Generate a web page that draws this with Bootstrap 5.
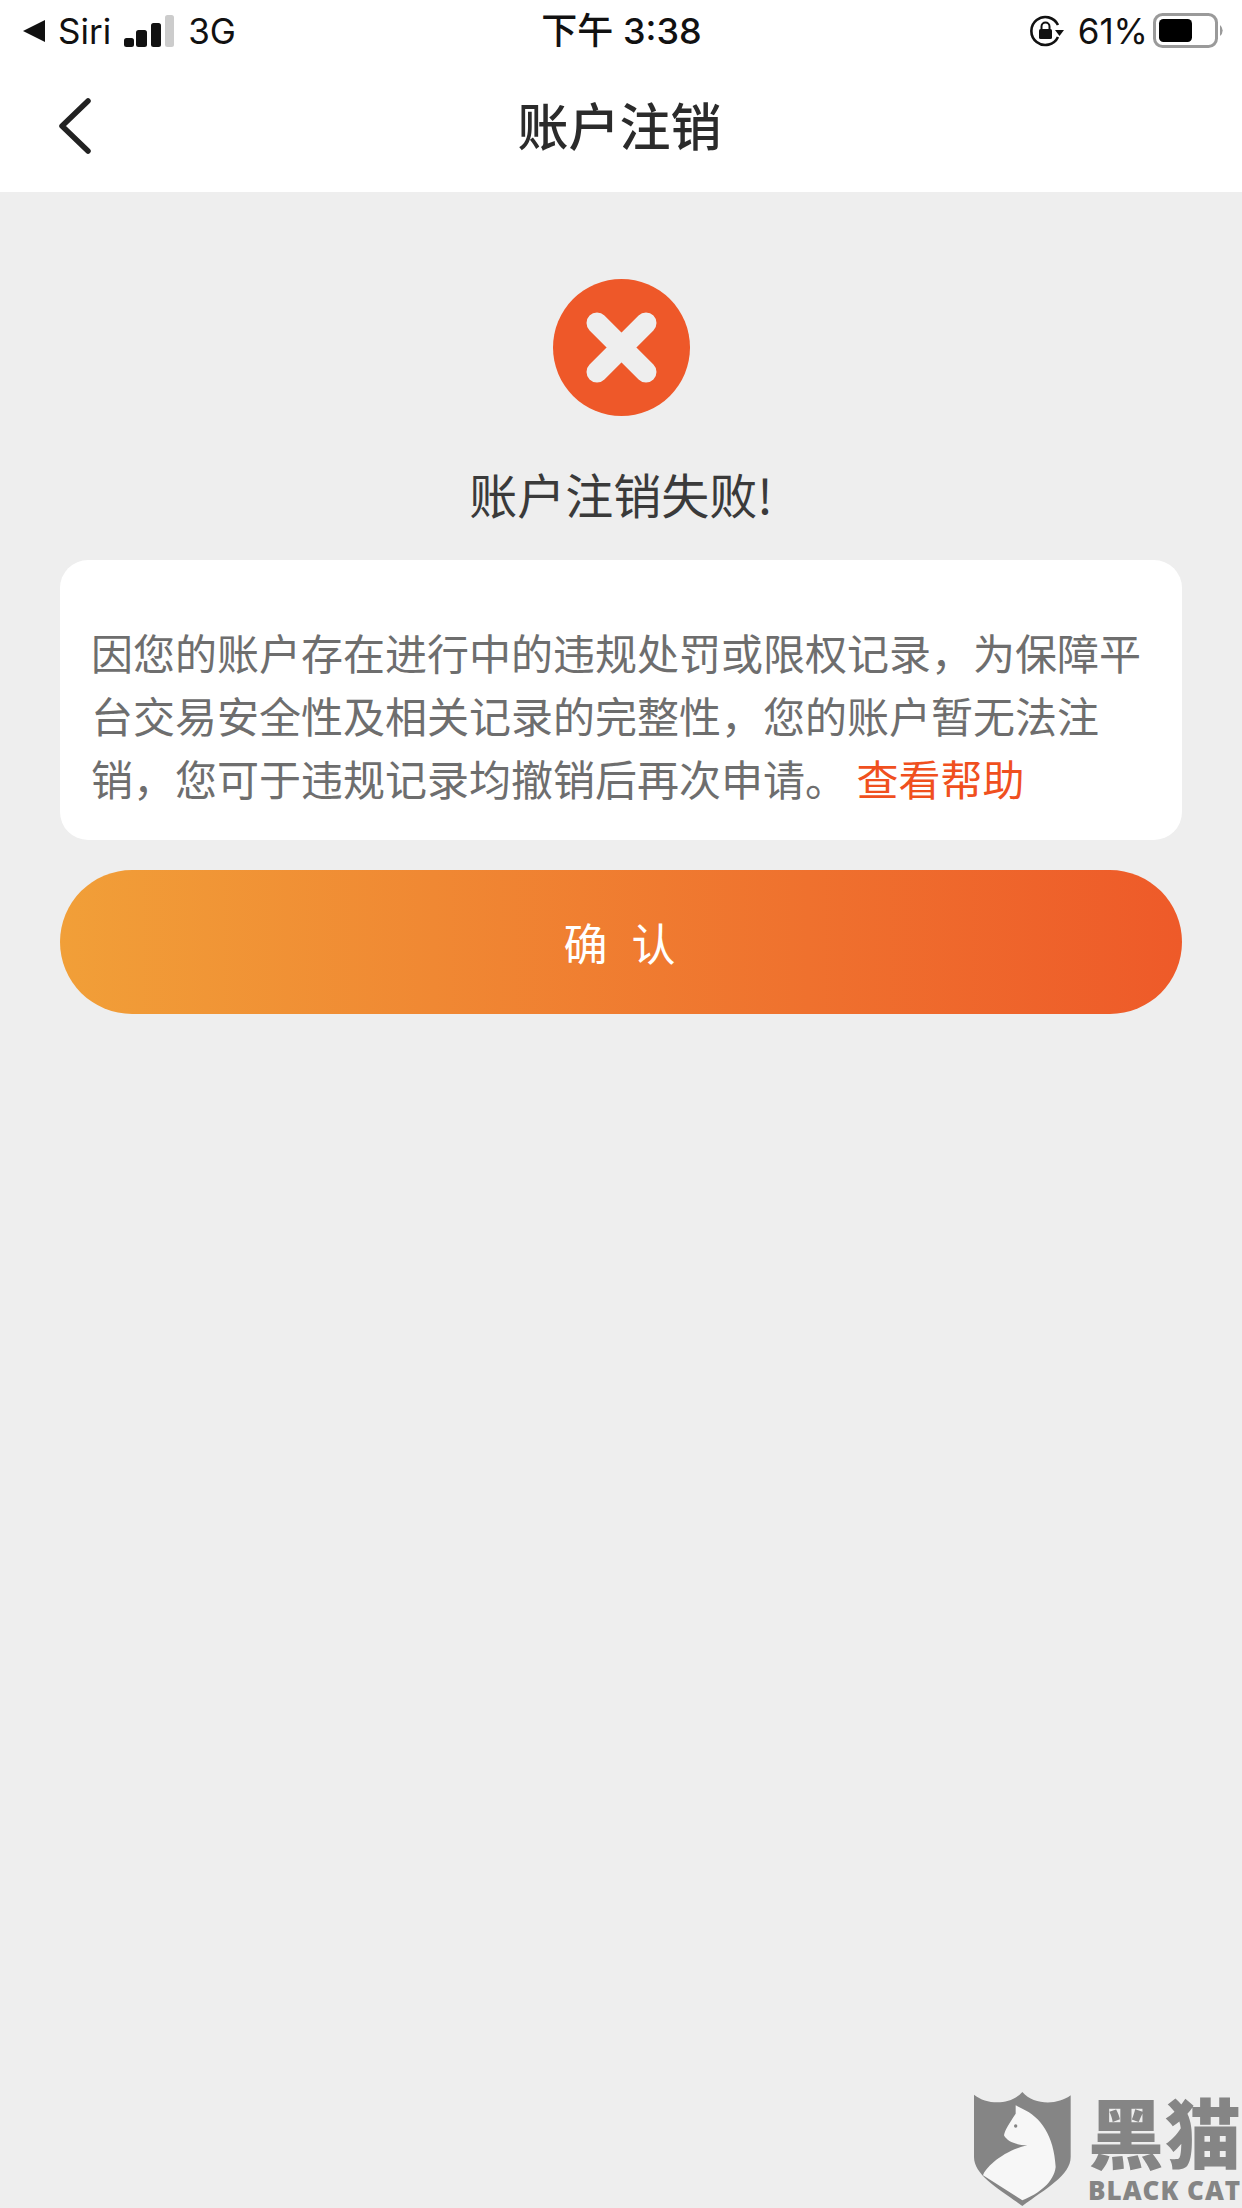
<!DOCTYPE html>
<html lang="zh-CN">
<head>
    <meta charset="UTF-8">
    <meta name="viewport" content="width=device-width, initial-scale=1.0">
    <title>账户注销</title>
    <link href="https://cdn.jsdelivr.net/npm/bootstrap@5.3.0/dist/css/bootstrap.min.css" rel="stylesheet">
    <style>
        body { background: #eeeeee; font-family: "Noto Sans CJK SC", sans-serif; height: 2208px; width: 1242px; overflow: hidden; }
        .status-bar { height: 62px; padding: 0 17px 0 23px; font-family: Inter, "Noto Sans CJK SC", sans-serif; font-size: 35px; color: #111; background: #fff; }
        .status-side { width: 400px; }
        .siri-label { margin-left: 13px; }
        .signal-bars { margin-left: 13px; }
        .net-label { margin-left: 12px; }
        .lock-pct { margin-left: 13px; }
        .batt-icon { margin-left: 5px; }
        .status-clock { font-size: 36px; font-weight: 500; margin-left: -5px; }
        .top-nav { height: 130px; background: #fff; }
        .back-link { left: 57px; top: 35px; line-height: 0; }
        .nav-title { font-size: 51px; font-weight: 500; color: #2b2b2b; line-height: 1; margin-top: -6px; margin-left: -3px; }
        .fail-icon { margin-top: 87px; line-height: 0; }
        .fail-title { font-size: 48px; color: #3a3a3a; line-height: 1; margin-top: 53px; }
        .notice-box { margin: 43px 60px 0; height: 280px; border-radius: 28px; background: #fff; padding: 60px 24px 0 31px; font-size: 42px; line-height: 63px; color: #6e6e6e; }
        .notice-link { color: #f0501e; text-decoration: none; }
        .confirm-btn { display: block; margin: 30px 60px 0; width: 1122px; height: 144px; border: 0; border-radius: 72px; background: linear-gradient(90deg, #f19f38, #ee5a29); color: #fff; font-size: 44px; letter-spacing: 7px; padding-left: 10px; }
        .watermark { right: 0; bottom: 1px; color: #858585; }
        .wm-name { font-size: 76px; font-weight: 900; line-height: 76px; letter-spacing: 1px; white-space: nowrap; }
        .wm-latin { font-family: "Open Sans", "Liberation Sans", sans-serif; font-size: 26px; font-weight: 800; line-height: 26px; letter-spacing: 1px; white-space: nowrap; margin-top: 9px; }
    </style>
</head>
<body class="position-relative m-0">

    <!-- Status bar -->
    <div class="status-bar d-flex align-items-center justify-content-between">
        <div class="status-side d-flex align-items-center">
            <svg width="22" height="24" viewBox="0 0 22 24"><path d="M0 12 22 1v22z" fill="#111"/></svg>
            <span class="siri-label">Siri</span>
            <svg class="signal-bars" width="52" height="32" viewBox="0 0 52 32">
                <rect x="0" y="23" width="10" height="9" rx="2.5" fill="#111"/>
                <rect x="12" y="15" width="11" height="17" rx="2.5" fill="#111"/>
                <rect x="27" y="8" width="10" height="24" rx="2.5" fill="#111"/>
                <rect x="41" y="0" width="9" height="32" rx="2.5" fill="#ccc"/>
            </svg>
            <span class="net-label">3G</span>
        </div>
        <div class="status-clock">下午 3:38</div>
        <div class="status-side d-flex align-items-center justify-content-end">
            <svg width="36" height="32" viewBox="0 0 36 32">
                <path d="M29 22A14 14 0 1 1 29 10" fill="none" stroke="#111" stroke-width="2.6"/>
                <path d="M26 15h9l-4.500 6z" fill="#111"/>
                <rect x="10" y="14" width="13" height="10" rx="1.500" fill="#111"/>
                <path d="M12.500 14v-2.500a4 4 0 0 1 8 0V14" fill="none" stroke="#111" stroke-width="2"/>
            </svg>
            <span class="lock-pct">61%</span>
            <svg class="batt-icon" width="72" height="36" viewBox="0 0 72 36">
                <rect x="1.500" y="1.500" width="62" height="32" rx="8" fill="none" stroke="#9a9a9a" stroke-width="3"/>
                <rect x="6" y="6" width="33" height="23" rx="4.500" fill="#000"/>
                <path d="M67 12a7 7 0 0 1 0 11z" fill="#9a9a9a"/>
            </svg>
        </div>
    </div>

    <!-- Nav -->
    <div class="top-nav position-relative d-flex align-items-center justify-content-center">
        <a href="#" class="back-link position-absolute">
            <svg width="36" height="58" viewBox="0 0 36 58"><path d="M31 4 5 29l26 25" fill="none" stroke="#222" stroke-width="5.500" stroke-linecap="round" stroke-linejoin="round"/></svg>
        </a>
        <div class="nav-title">账户注销</div>
    </div>

    <!-- Result -->
    <div class="fail-icon text-center">
        <svg width="137" height="137" viewBox="0 0 137 137">
            <circle cx="68.500" cy="68.500" r="68.500" fill="#ee5829"/>
            <path d="M44 44 93 93M93 44 44 93" stroke="#eeeeee" stroke-width="21" stroke-linecap="round"/>
        </svg>
    </div>
    <div class="fail-title text-center">账户注销失败!</div>

    <div class="notice-box">因您的账户存在进行中的违规处罚或限权记录&#65292;为保障平台交易安全性及相关记录的完整性&#65292;您的账户暂无法注销&#65292;您可于违规记录均撤销后再次申请。 <a href="#" class="notice-link">查看帮助</a></div>

    <button type="button" class="confirm-btn">确 认</button>

    <!-- Watermark -->
    <div class="watermark position-absolute d-flex">
        <svg width="98" height="115" viewBox="0 0 294 345">
            <path d="M0 8C40 40 110 40 145 0C180 40 250 40 290 10V195C290 250 215 290 145 342C75 290 0 250 0 195Z" fill="#858585"/>
            <path d="M125 40 145 50C200 75 240 130 245 225C240 270 195 305 145 325L27 250C35 225 90 175 160 160C130 160 100 150 90 130C92 115 105 95 125 65Z" fill="#f7f7f7"/>
            <circle cx="125" cy="102" r="5" fill="#858585"/>
        </svg>
        <div class="ms-3">
            <div class="wm-name">黑猫</div>
            <div class="wm-latin">BLACK CAT</div>
        </div>
    </div>

    <script src="https://cdn.jsdelivr.net/npm/bootstrap@5.3.0/dist/js/bootstrap.bundle.min.js"></script>
</body>
</html>
